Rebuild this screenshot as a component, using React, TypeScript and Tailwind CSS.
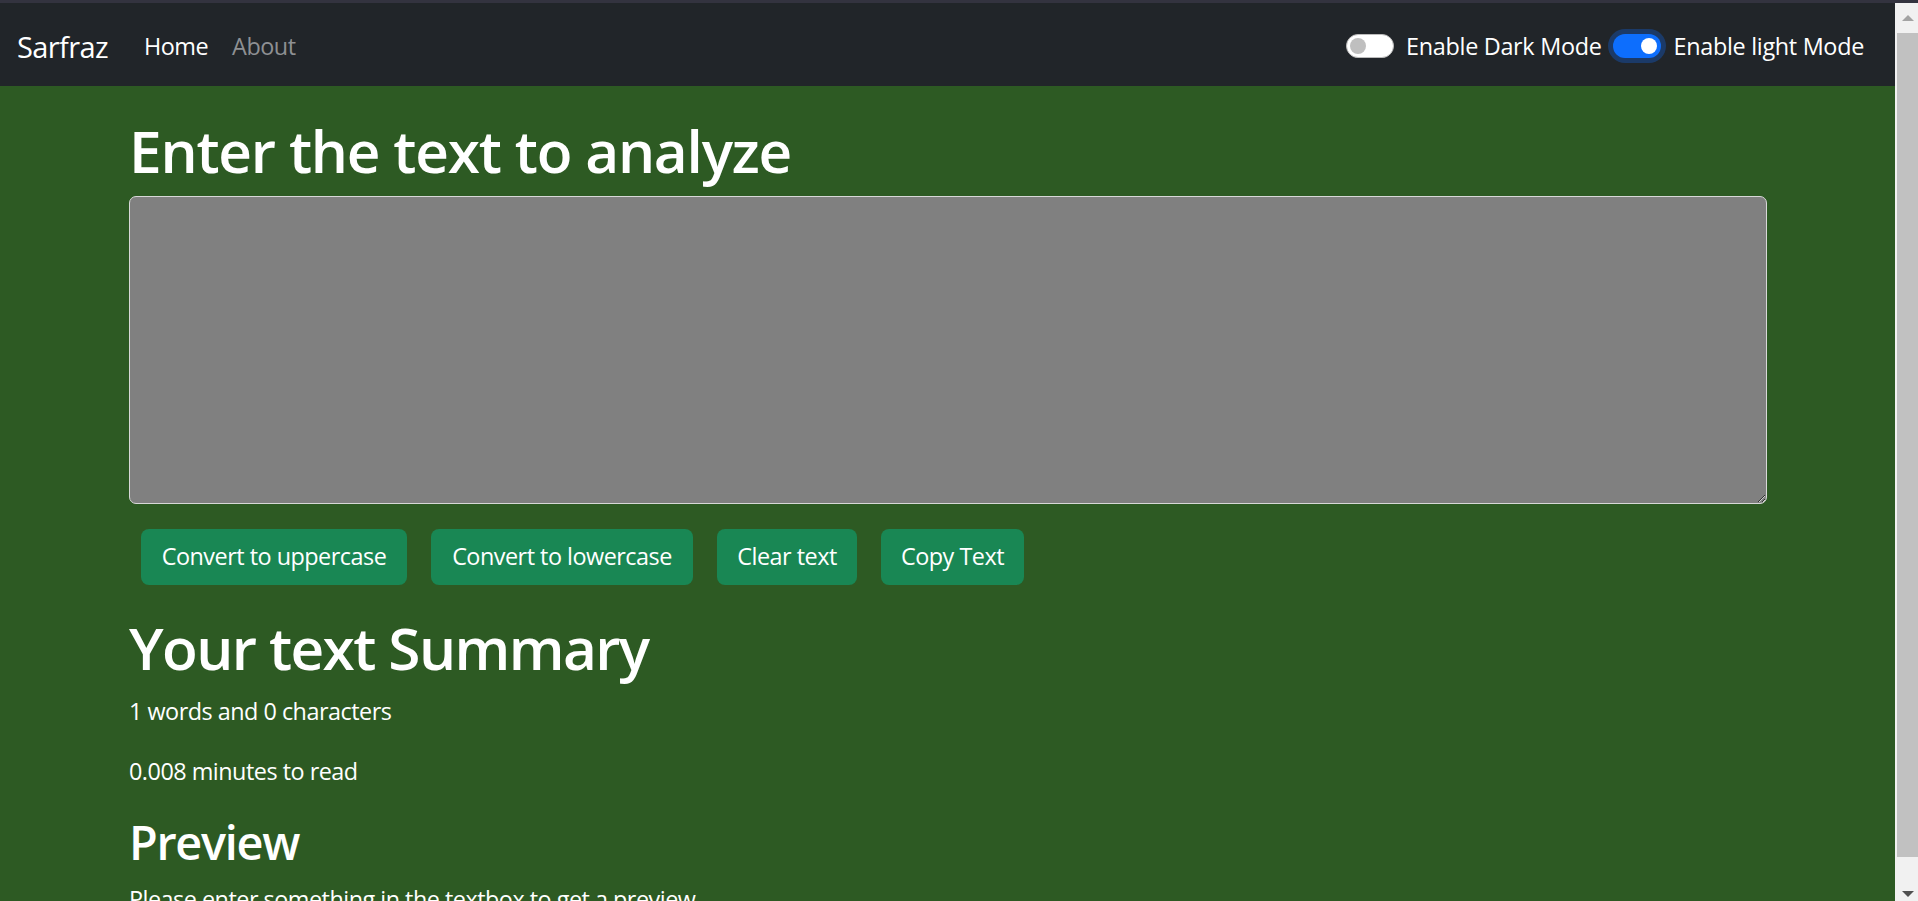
import { useState } from "react";

const font = { fontFamily: '"Open Sans", "Noto Sans", sans-serif' };

function Toggle({ on }: { on: boolean }) {
  if (on) {
    return (
      <span className="relative inline-flex h-[24px] w-[48px] shrink-0 items-center justify-end rounded-full bg-[#0d6efd] pr-[4px] shadow-[0_0_0_5px_rgba(13,110,253,0.3)]">
        <span className="h-[16px] w-[16px] rounded-full bg-white" />
      </span>
    );
  }
  return (
    <span className="inline-flex h-[24px] w-[48px] shrink-0 items-center rounded-full border border-[#bbb] bg-white pl-[3px]">
      <span className="h-[16px] w-[16px] rounded-full bg-[#bfbfbf]" />
    </span>
  );
}

function Scrollbar() {
  return (
    <div className="flex w-[23px] shrink-0 flex-col bg-[#f1f1f1] pl-[2px]">
      <div className="flex h-[30px] items-center justify-center">
        <span className="h-0 w-0 border-x-[6px] border-b-[6px] border-x-transparent border-b-[#a3a3a3]" />
      </div>
      <div className="h-[824px] bg-[#c1c1c1]" />
      <div className="flex flex-1 items-end justify-center pb-[4px]">
        <span className="h-0 w-0 border-x-[6px] border-t-[6px] border-x-transparent border-t-[#505050]" />
      </div>
    </div>
  );
}

export default function App() {
  const [text, setText] = useState("");

  return (
    <div className="flex h-[901px] w-full flex-col overflow-hidden bg-[#2d5a23]" style={font}>
      <div className="h-[3px] shrink-0 bg-[#33333f]" />
      <div className="flex min-h-0 flex-1">
        <div className="flex min-w-0 flex-1 flex-col">
          {/* navbar */}
          <nav className="flex h-[83px] shrink-0 items-center bg-[#212529] pl-[17px] pr-[31px] pt-[4px] text-white">
            <span className="text-[29px] tracking-[-0.6px]">Sarfraz</span>
            <a className="ml-[36px] text-[23.4px] tracking-[-0.5px] text-white">Home</a>
            <a className="ml-[24px] text-[23.4px] tracking-[-0.5px] text-[#8e9093]">About</a>
            <div className="ml-auto flex items-center text-[23.4px] tracking-[-0.3px]">
              <Toggle on={false} />
              <span className="ml-[12px]">Enable Dark Mode</span>
              <span className="ml-[11px] flex"><Toggle on={true} /></span>
              <span className="ml-[13px]">Enable light Mode</span>
            </div>
          </nav>

          {/* main */}
          <main className="ml-[129px] w-[1638px] pt-[29px] text-white">
            <h1 className="mb-[11px] text-[58.5px] font-semibold leading-[70px] tracking-[-1.2px]">
              Enter the text to analyze
            </h1>
            <textarea
              value={text}
              onChange={(e) => setText(e.target.value)}
              className="block h-[308px] w-full resize-y rounded-[7px] border border-[#d8d8d8] bg-[#808080] p-3 text-white outline-none"
            />
            <div className="mt-[25px] flex gap-[24px] pl-[12px] text-[23.4px] tracking-[-0.5px]">
              <button className="h-[56px] w-[266px] rounded-[8px] bg-[#198754]">Convert to uppercase</button>
              <button className="h-[56px] w-[262px] rounded-[8px] bg-[#198754]">Convert to lowercase</button>
              <button className="h-[56px] w-[140px] rounded-[8px] bg-[#198754]">Clear text</button>
              <button className="h-[56px] w-[143px] rounded-[8px] bg-[#198754]">Copy Text</button>
            </div>

            <h1 className="mt-[27px] mb-[12px] text-[58.5px] font-semibold leading-[70px] tracking-[-1.6px]">
              Your text Summary
            </h1>
            <p className="text-[23.4px] leading-[35px] tracking-[-0.5px]">1 words and 0 characters</p>
            <p className="mt-[24.5px] text-[23.4px] leading-[35px] tracking-[-0.5px]">0.008 minutes to read</p>
            <h2 className="mt-[25px] mb-[12px] text-[46.8px] font-semibold leading-[56px] tracking-[-1.3px]">Preview</h2>
            <p className="text-[23.4px] leading-[35px] tracking-[-0.5px]">
              Please enter something in the textbox to get a preview.
            </p>
          </main>
        </div>
        <Scrollbar />
      </div>
    </div>
  );
}
